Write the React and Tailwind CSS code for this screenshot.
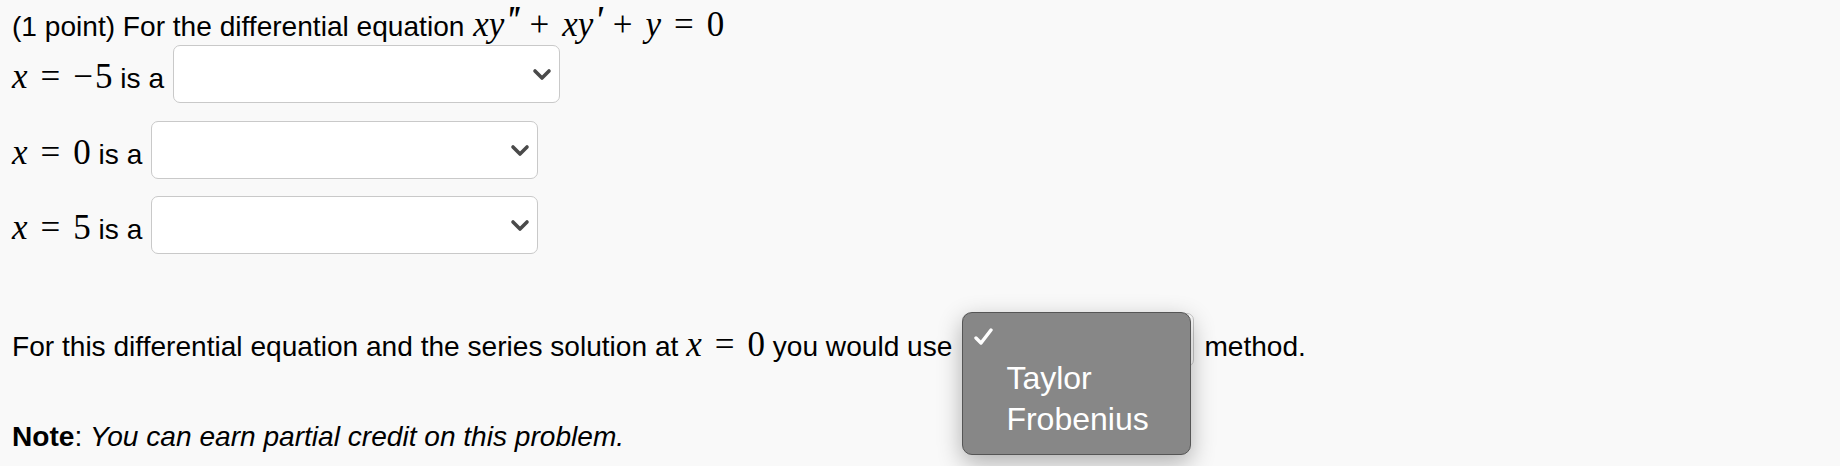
import { useState } from "react";

// pequenos pedaços de matemática no estilo MathJax
const V = ({ children }) => (
  <span className="font-['Liberation_Serif',serif] italic text-[35px] leading-none">{children}</span>
);

const N = ({ children }) => (
  <span className="font-['Liberation_Serif',serif] text-[35px] leading-none">{children}</span>
);

const Op = ({ children, className = "mx-[13px]" }) => (
  <span className={"font-['Liberation_Serif',serif] text-[35px] leading-none " + className}>{children}</span>
);

const Prime = ({ children }) => (
  <span className="font-['Liberation_Serif',serif] italic text-[40px] leading-none relative -top-[3px] ml-[1px] tracking-[-3px]">
    {children}
  </span>
);

const Chevron = () => (
  <svg width="20" height="13" viewBox="0 0 20 13" fill="none">
    <polyline points="3,3 10,10 17,3" stroke="#4a4a4a" strokeWidth="3.6" strokeLinecap="round" strokeLinejoin="round" />
  </svg>
);

const Select = ({ width = "w-[387px]", height = "h-[58px]" }) => (
  <div className={`${width} ${height} shrink-0 bg-white border border-[#c9c9c9] rounded-[7px] flex items-center justify-end pr-[7px]`}>
    <Chevron />
  </div>
);

const App = () => {
  const [options] = useState(["Taylor", "Frobenius"]);

  return (
    <div className="min-h-screen w-[1840px] bg-[#f9f9f9] text-black font-['Liberation_Sans',Arial,sans-serif] text-[28.1px] pl-[12px] pt-[3px]">
      {/* Enunciado */}
      <div className="h-[40px] leading-[40px] whitespace-nowrap">
        (1 point) For the differential equation{" "}
        <span className="ml-[1px]">
          <V>x</V>
          <V>y</V>
          <Prime>''</Prime>
          <Op className="mx-[13px]">+</Op>
          <V>x</V>
          <V>y</V>
          <Prime>'</Prime>
          <Op className="mx-[13px]">+</Op>
          <V>y</V>
          <Op className="mx-[13px]">=</Op>
          <N>0</N>
        </span>
      </div>

      {/* Pontos */}
      <div className="mt-[2px] flex items-center gap-[9px]">
        <div className="pt-[10px] leading-[40px] whitespace-nowrap">
          <V>x</V>
          <Op>=</Op>
          <N>−</N>
          <N>
            <span className="ml-[2px]">5</span>
          </N>{" "}
          is a
        </div>
        <Select />
      </div>

      <div className="mt-[18px] flex items-center gap-[9px]">
        <div className="pt-[10px] leading-[40px] whitespace-nowrap">
          <V>x</V>
          <Op>=</Op>
          <N>0</N> is a
        </div>
        <Select />
      </div>

      <div className="mt-[17px] flex items-center gap-[9px]">
        <div className="pt-[10px] leading-[40px] whitespace-nowrap">
          <V>x</V>
          <Op>=</Op>
          <N>5</N> is a
        </div>
        <Select />
      </div>

      {/* Método */}
      <div className="mt-[59px] flex items-center">
        <div className="pt-[14px] leading-[40px] whitespace-nowrap">
          For this differential equation and the series solution at{" "}
          <V>x</V>
          <Op>=</Op>
          <N>0</N> you would use
        </div>
        <div className="relative ml-[10px]">
          <Select width="w-[232px]" height="h-[54px]" />
          {/* Menu aberto */}
          <div className="absolute left-0 -top-[1px] w-[229px] h-[143px] bg-[#878787] border border-[#555] rounded-[10px] shadow-[0_8px_24px_rgba(0,0,0,0.3)] pt-[4px] z-10">
            <div className="h-[40px] flex items-center pl-[11px]">
              <svg width="19" height="18" viewBox="0 0 19 18" fill="none">
                <polyline points="2,10 7,15 17,2" stroke="white" strokeWidth="3.4" strokeLinecap="round" strokeLinejoin="round" />
              </svg>
            </div>
            {options.map((o) => (
              <div key={o} className="h-[41px] flex items-center pl-[43px] text-white text-[32px]">
                {o}
              </div>
            ))}
          </div>
        </div>
        <div className="pt-[14px] leading-[40px] ml-[10px]">method.</div>
      </div>

      {/* Nota */}
      <div className="mt-[50px] leading-[40px] whitespace-nowrap">
        <span className="font-bold">Note</span>: <em>You can earn partial credit on this problem.</em>
      </div>
    </div>
  );
};

export default App;
